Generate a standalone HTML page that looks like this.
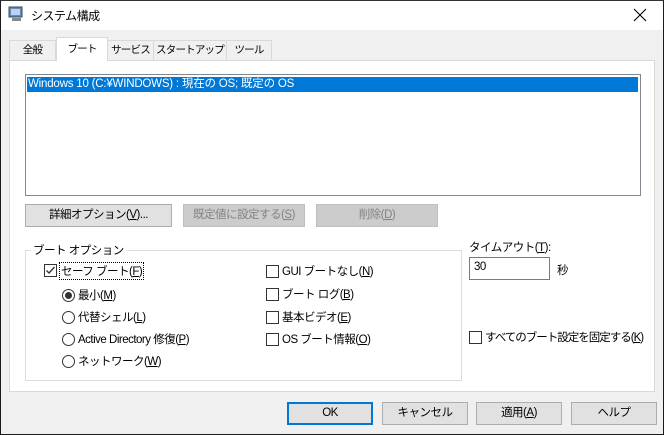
<!DOCTYPE html>
<html><head><meta charset="utf-8"><style>
*{box-sizing:border-box;margin:0;padding:0}
body{width:664px;height:435px;overflow:hidden;font-family:"Liberation Sans","Noto Sans CJK JP",sans-serif;font-size:11.5px;letter-spacing:-0.5px;color:#000;background:#f0f0f0;position:relative}
.a{position:absolute;white-space:nowrap}
.win{position:absolute;left:0;top:0;width:664px;height:435px;border:1px solid #1a1a1a;border-top-color:#333}
.title{position:absolute;left:1px;top:1px;width:662px;height:29px;background:#fff}
.tab{position:absolute;background:#f0f0f0;border:1px solid #d9d9d9;border-bottom:none;height:20px;top:40px;text-align:center;line-height:18px;white-space:nowrap;letter-spacing:-0.8px;font-size:10.5px;overflow:hidden}
.btn{position:absolute;height:23px;background:#e1e1e1;border:1px solid #adadad;text-align:center;line-height:21px;white-space:nowrap}
.dis{background:#cccccc;border-color:#bfbfbf;color:#838383}
.cb{position:absolute;width:13px;height:13px;border:1px solid #333;background:#fff}
.rb{position:absolute;width:13px;height:13px;border:1px solid #333;border-radius:50%;background:#fff}
u{text-decoration:underline}
</style></head><body>
<div class="title"></div>
<svg class="a" style="left:8px;top:6px" width="18" height="16"><rect x="1" y="1" width="13" height="10" fill="#6a8bb8" stroke="#34495e"/><rect x="3" y="3" width="9" height="6" fill="#b8d4f0"/><rect x="4" y="12" width="9" height="3" fill="#888"/></svg>
<div class="a" style="left:31px;top:7px;font-size:12px">システム構成</div>
<svg class="a" style="left:633px;top:8px" width="14" height="14"><path d="M1 1L13 13M13 1L1 13" stroke="#000" stroke-width="1.1"/></svg>

<div class="a" style="left:9px;top:60px;width:646px;height:332px;background:#fff;border:1px solid #d9d9d9"></div>
<div class="tab" style="left:9px;width:47px">全般</div>
<div class="tab" style="left:107px;width:47px">サービス</div>
<div class="tab" style="left:153px;width:74px">スタートアップ</div>
<div class="tab" style="left:226px;width:46px">ツール</div>
<div class="tab" style="left:56px;top:37px;height:24px;width:52px;background:#fff;line-height:22px;border-color:#d9d9d9">ブート</div>

<div class="a" style="left:25px;top:74px;width:616px;height:122px;border:1px solid #828790;background:#fff"></div>
<div class="a" style="left:27px;top:77px;width:611px;height:15px;background:#0078d7;color:#fff;line-height:15px;padding-left:1px;letter-spacing:-0.2px">Windows 10 (C:¥WINDOWS) : 現在の OS; 既定の OS</div>

<div class="btn" style="left:25px;top:204px;width:147px">詳細オプション(<u>V</u>)...</div>
<div class="btn dis" style="left:183px;top:204px;width:122px">既定値に設定する(<u>S</u>)</div>
<div class="btn dis" style="left:316px;top:204px;width:122px">削除(<u>D</u>)</div>

<div class="a" style="left:25px;top:250px;width:437px;height:131px;border:1px solid #dcdcdc"></div>
<div class="a" style="left:31px;top:242px;background:#fff;padding:0 2px">ブート オプション</div>

<div class="cb" style="left:44px;top:264px"></div>
<svg class="a" style="left:44px;top:264px" width="13" height="13"><path d="M2.5 6.5L5 9L10.5 3" stroke="#333" stroke-width="1.3" fill="none"/></svg>
<div class="a" style="left:59px;top:262px;border:1px dotted #000;padding:0 1px">セーフ ブート(<u>F</u>)</div>
<div class="rb" style="left:62px;top:289px"></div><div class="a" style="left:65px;top:292px;width:7px;height:7px;border-radius:50%;background:#333"></div>
<div class="a" style="left:78px;top:287px">最小(<u>M</u>)</div>
<div class="rb" style="left:62px;top:311px"></div><div class="a" style="left:78px;top:309px">代替シェル(<u>L</u>)</div>
<div class="rb" style="left:62px;top:333px"></div><div class="a" style="left:78px;top:331px">Active Directory 修復(<u>P</u>)</div>
<div class="rb" style="left:62px;top:355px"></div><div class="a" style="left:78px;top:353px">ネットワーク(<u>W</u>)</div>

<div class="cb" style="left:266px;top:265px"></div><div class="a" style="left:282px;top:263px">GUI ブートなし(<u>N</u>)</div>
<div class="cb" style="left:266px;top:288px"></div><div class="a" style="left:282px;top:286px">ブート ログ(<u>B</u>)</div>
<div class="cb" style="left:266px;top:311px"></div><div class="a" style="left:282px;top:309px">基本ビデオ(<u>E</u>)</div>
<div class="cb" style="left:266px;top:333px"></div><div class="a" style="left:282px;top:331px">OS ブート情報(<u>O</u>)</div>

<div class="a" style="left:469px;top:239px">タイムアウト(<u>T</u>):</div>
<div class="a" style="left:469px;top:257px;width:81px;height:23px;border:1px solid #7a7a7a;background:#fff;padding:3px 4px">30</div>
<div class="a" style="left:557px;top:262px">秒</div>
<div class="cb" style="left:469px;top:331px"></div><div class="a" style="left:485px;top:329px;letter-spacing:-1px">すべてのブート設定を固定する(<u>K</u>)</div>

<div class="btn" style="left:287px;top:402px;width:86px;border:2px solid #0078d7;line-height:19px">OK</div>
<div class="btn" style="left:382px;top:402px;width:86px">キャンセル</div>
<div class="btn" style="left:476px;top:402px;width:86px">適用(<u>A</u>)</div>
<div class="btn" style="left:571px;top:402px;width:86px">ヘルプ</div>
<div class="win"></div>
</body></html>
